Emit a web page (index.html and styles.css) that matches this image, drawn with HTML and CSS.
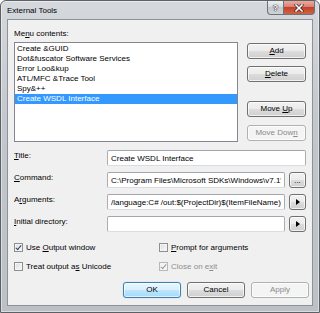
FILE: index.html
```html
<!DOCTYPE html>
<html lang="en">
<head>
    <meta charset="UTF-8">
    <title>External Tools</title>
    <link rel="stylesheet" href="styles.css">
</head>
<body>
    <div class="window">
        <div class="titlebar">
            <span class="caption">External Tools</span>
            <div class="caption-buttons">
                <span class="cap-btn help">?</span>
                <span class="cap-btn close">
                    <svg width="10" height="8" viewBox="0 0 10 8">
                        <path d="M2 1 L8 7 M8 1 L2 7" stroke="#3a2a28" stroke-width="3" stroke-linecap="square"/>
                        <path d="M2 1 L8 7 M8 1 L2 7" stroke="#fff" stroke-width="1.6" stroke-linecap="square"/>
                    </svg>
                </span>
            </div>
        </div>

        <div class="client">
            <div class="top">
                <div class="menu">
                    <div class="label">Me<u>n</u>u contents:</div>
                    <ul class="list">
                        <li>Create &amp;GUID</li>
                        <li>Dot&amp;fuscator Software Services</li>
                        <li>Error Loo&amp;kup</li>
                        <li>ATL/MFC &amp;Trace Tool</li>
                        <li>Spy&amp;++</li>
                        <li class="selected">Create WSDL Interface</li>
                    </ul>
                </div>
                <div class="side-buttons">
                    <button class="btn add"><u>A</u>dd</button>
                    <button class="btn delete"><u>D</u>elete</button>
                    <button class="btn move-up">Move <u>U</u>p</button>
                    <button class="btn move-down" disabled>Move Dow<u>n</u></button>
                </div>
            </div>

            <div class="fields">
                <label class="field-label"><u>T</u>itle:</label>
                <input class="field wide" type="text" value="Create WSDL Interface">

                <label class="field-label"><u>C</u>ommand:</label>
                <input class="field" type="text" value="C:\Program Files\Microsoft SDKs\Windows\v7.1\Bin\wsdl.exe">
                <button class="btn small dots">...</button>

                <label class="field-label">A<u>r</u>guments:</label>
                <input class="field" type="text" value="/language:C# /out:$(ProjectDir)$(ItemFileName)">
                <button class="btn small">
                    <svg width="4" height="6" viewBox="0 0 4 6"><polygon points="0,0 4,3 0,6" fill="#000"/></svg>
                </button>

                <label class="field-label"><u>I</u>nitial directory:</label>
                <input class="field" type="text" value="">
                <button class="btn small">
                    <svg width="4" height="6" viewBox="0 0 4 6"><polygon points="0,0 4,3 0,6" fill="#000"/></svg>
                </button>
            </div>

            <div class="options">
                <div class="option">
                    <span class="box checked"></span>
                    <span>Use <u>O</u>utput window</span>
                </div>
                <div class="option">
                    <span class="box"></span>
                    <span><u>P</u>rompt for arguments</span>
                </div>
                <div class="option">
                    <span class="box"></span>
                    <span>Treat output a<u>s</u> Unicode</span>
                </div>
                <div class="option disabled">
                    <span class="box checked"></span>
                    <span>Close on e<u>x</u>it</span>
                </div>
            </div>

            <div class="actions">
                <button class="btn default">OK</button>
                <button class="btn">Cancel</button>
                <button class="btn" disabled>Apply</button>
            </div>
        </div>
    </div>
</body>
</html>
```

FILE: styles.css
```css
body {
    margin: 0;
    width: 320px;
    height: 313px;
    overflow: hidden;
    font-family: "Liberation Sans", Arial, sans-serif;
    font-size: 8px;
    color: #000;
    background: #fff;
}
u {
    text-decoration-thickness: 1px;
    text-underline-offset: 1px;
}
.window {
    box-sizing: border-box;
    width: 320px;
    height: 313px;
    display: flex;
    flex-direction: column;
    padding: 0 6px 6px;
    border: 1px solid #5d6166;
    border-radius: 6px 6px 0 0;
    background: linear-gradient(to bottom, #d5d9de, #c2c7cd 40%, #bcc1c7);
    box-shadow: inset 0 0 0 1px rgba(255, 255, 255, 0.45);
}
.titlebar {
    height: 18px;
    display: flex;
    align-items: flex-start;
    justify-content: space-between;
}
.caption {
    padding-top: 4px;
    line-height: 11px;
    color: #000;
}
.caption-buttons {
    display: flex;
    margin-right: -2px;
}
.cap-btn {
    box-sizing: border-box;
    height: 14px;
    display: flex;
    align-items: center;
    justify-content: center;
    border: 1px solid #6f7378;
    border-top: none;
}
.help {
    width: 16px;
    border-right: none;
    border-radius: 0 0 0 4px;
    background: linear-gradient(to bottom, #eceef0, #d6d9dd 50%, #c4c8cd 50%, #cfd3d8);
    color: #fff;
    font-weight: bold;
    font-size: 9px;
    text-shadow: 0 0 1px #333, 0 0 1px #333, 0 0 1px #333;
}
.close {
    width: 32px;
    border-radius: 0 0 4px 0;
    background: linear-gradient(to bottom, #e9ab9f, #d87b6c 50%, #c4402e 50%, #d0643f);
}
.client {
    flex: 1;
    padding: 9px 6px 0 6px;
    background: #f0f0f0;
    border: 1px solid #8e9297;
}
.top {
    display: flex;
    gap: 9px;
}
.menu {
    width: 224px;
}
.label {
    line-height: 10px;
    margin-bottom: 3px;
}
.list {
    box-sizing: border-box;
    height: 100px;
    margin: 0;
    padding: 1px 0 0;
    list-style: none;
    background: #fff;
    border: 1px solid #828790;
}
.list li {
    height: 10px;
    line-height: 10px;
    padding-left: 2px;
    white-space: nowrap;
}
.list li.selected {
    background: #3399ff;
    color: #fff;
}
.side-buttons {
    width: 59px;
    display: flex;
    flex-direction: column;
    padding-top: 14px;
}
.btn {
    box-sizing: border-box;
    height: 16px;
    padding: 0;
    font: inherit;
    line-height: 14px;
    text-align: center;
    white-space: nowrap;
    color: #000;
    border: 1px solid #707070;
    border-radius: 3px;
    background: linear-gradient(to bottom, #f2f2f2, #ebebeb 50%, #dddddd 50%, #cfcfcf);
    box-shadow: inset 0 0 0 1px rgba(255, 255, 255, 0.7);
}
.btn:disabled {
    color: #8a8a8a;
    border-color: #adb2b5;
    background: #f4f4f4;
}
.btn.default {
    border-color: #3c7fb1;
    background: linear-gradient(to bottom, #eaf6fd, #d9f0fc 50%, #bee6fd 50%, #a7d9f5);
    box-shadow: inset 0 0 0 1px rgba(255, 255, 255, 0.6), 0 0 1px #6ec2f0;
}
.delete {
    margin-top: 7px;
}
.move-up {
    margin-top: 19px;
}
.move-down {
    margin-top: 8px;
}
.fields {
    margin-top: 8px;
    display: grid;
    grid-template-columns: 89px 178px 17px;
    grid-auto-rows: 16px;
    column-gap: 4px;
    row-gap: 6px;
}
.field-label {
    grid-column: 1;
    padding-top: 1px;
    line-height: 10px;
    white-space: nowrap;
}
.field {
    box-sizing: border-box;
    width: 100%;
    height: 16px;
    margin: 0;
    padding: 0 3px;
    font: inherit;
    color: #000;
    background: #fff;
    border: 1px solid #abadb3;
    border-top-color: #a3a6ad;
    border-bottom-color: #d9dde2;
    border-radius: 2px;
    outline: none;
}
.field.wide {
    grid-column: 2 / 4;
}
.btn.small {
    width: 17px;
}
.btn.small svg {
    vertical-align: middle;
}
.btn.dots {
    line-height: 16px;
}
.options {
    margin-top: 10px;
    display: grid;
    grid-template-columns: 145px 1fr;
    grid-auto-rows: 11px;
    row-gap: 8px;
}
.option {
    display: flex;
    align-items: center;
    gap: 3px;
    line-height: 11px;
    white-space: nowrap;
}
.box {
    box-sizing: border-box;
    width: 9px;
    height: 9px;
    border: 1px solid #8e8f8f;
    background: linear-gradient(135deg, #dcdcdc, #fbfbfb);
    box-shadow: inset 0 0 0 1px #f4f4f4;
    position: relative;
}
.box.checked::after {
    content: "";
    position: absolute;
    left: 2px;
    top: 0;
    width: 2px;
    height: 5px;
    border: solid #2c3e63;
    border-width: 0 1.5px 1.5px 0;
    transform: rotate(40deg);
}
.option.disabled {
    color: #8d8d8d;
}
.option.disabled .box {
    border-color: #b8b8b8;
    background: #f4f4f4;
}
.option.disabled .box.checked::after {
    border-color: #9a9a9a;
}
.actions {
    margin-top: 10px;
    margin-right: -3px;
    display: flex;
    justify-content: flex-end;
    gap: 6px;
}
.actions .btn {
    width: 58px;
}
```
